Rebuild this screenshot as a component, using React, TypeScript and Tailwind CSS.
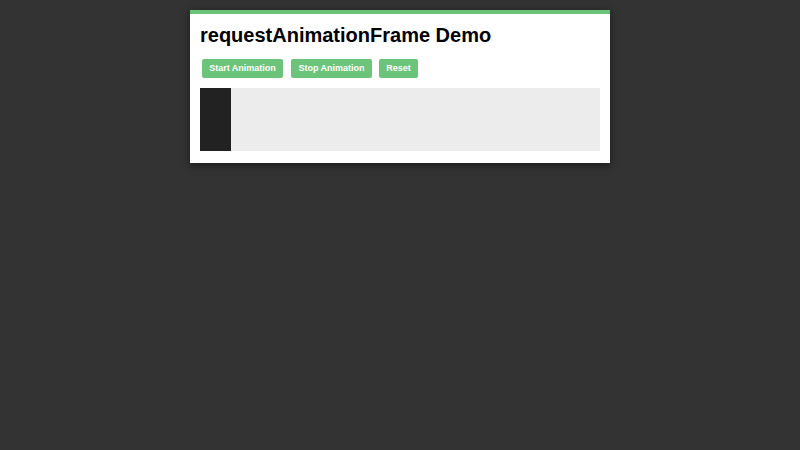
export default function App() {
  return (
    <div className="min-h-[450px] w-full bg-[#333333] pt-[10px]" style={{ fontFamily: '"Liberation Sans", Arial, sans-serif' }}>
      <div className="mx-auto w-[420px] border-t-4 border-[#6cc47a] bg-white px-[10px] pb-[12px] shadow-[0_2px_8px_rgba(0,0,0,0.5)]">
        <h1 className="pt-[9px] text-[20px] font-bold leading-[24px] text-black">requestAnimationFrame Demo</h1>
        <div className="mt-[12px] flex items-center pl-[2px]">
          <button className="h-[19px] w-[81px] whitespace-nowrap rounded-[2px] bg-[#6cc47a] text-[9px] font-bold text-white">Start Animation</button>
          <button className="ml-[8px] h-[19px] w-[81px] whitespace-nowrap rounded-[2px] bg-[#6cc47a] text-[9px] font-bold text-white">Stop Animation</button>
          <button className="ml-[7px] h-[19px] w-[39px] whitespace-nowrap rounded-[2px] bg-[#6cc47a] text-[9px] font-bold text-white">Reset</button>
        </div>
        <div className="mt-[10px] flex h-[63px] bg-[#ececec]">
          <div className="h-full w-[31px] bg-[#222222]" />
        </div>
      </div>
    </div>
  );
}
